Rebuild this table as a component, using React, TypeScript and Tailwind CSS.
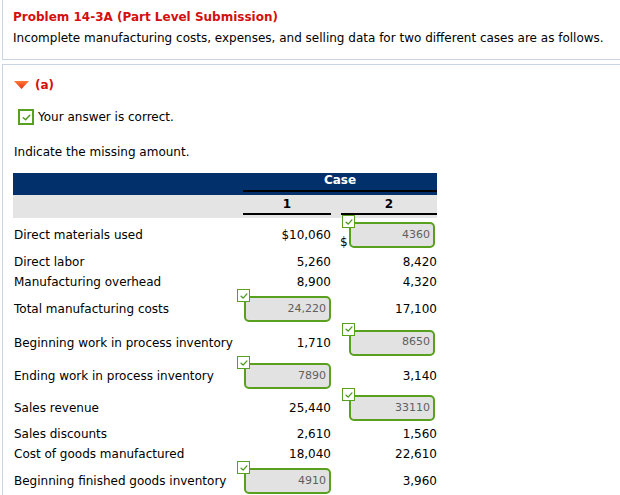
import React from "react";

type Cell = { value: string; input?: boolean; dollar?: boolean };
type Row = { label: string; h: string; c1: Cell; c2: Cell };

const rows: Row[] = [
	{ label: "Direct materials used", h: "h-[34px]", c1: { value: "$10,060" }, c2: { value: "4360", input: true, dollar: true } },
	{ label: "Direct labor", h: "h-[20px]", c1: { value: "5,260" }, c2: { value: "8,420" } },
	{ label: "Manufacturing overhead", h: "h-[20px]", c1: { value: "8,900" }, c2: { value: "4,320" } },
	{ label: "Total manufacturing costs", h: "h-[34px]", c1: { value: "24,220", input: true }, c2: { value: "17,100" } },
	{ label: "Beginning work in process inventory", h: "h-[33px]", c1: { value: "1,710" }, c2: { value: "8650", input: true } },
	{ label: "Ending work in process inventory", h: "h-[34px]", c1: { value: "7890", input: true }, c2: { value: "3,140" } },
	{ label: "Sales revenue", h: "h-[30px]", c1: { value: "25,440" }, c2: { value: "33110", input: true } },
	{ label: "Sales discounts", h: "h-[21px]", c1: { value: "2,610" }, c2: { value: "1,560" } },
	{ label: "Cost of goods manufactured", h: "h-[20px]", c1: { value: "18,040" }, c2: { value: "22,610" } },
	{ label: "Beginning finished goods inventory", h: "h-[34px]", c1: { value: "4910", input: true }, c2: { value: "3,960" } },
];

function Tick({ className }: { className?: string }) {
	return (
		<svg viewBox="0 0 12 12" className={className} fill="none">
			<path d="M2.5 6.2 L5 8.5 L9.5 3.5" stroke="#4f9a1e" strokeWidth="1.6" strokeLinecap="round" strokeLinejoin="round" />
		</svg>
	);
}

function AnswerBox({ cell, width }: { cell: Cell; width: string }) {
	return (
		<div className={`relative ${width}`}>
			<div className="h-[26px] rounded-[5px] border-2 border-[#58a01e] bg-[#e2e2e2] flex items-center justify-end pr-[3px] text-[11px] text-[#5f5f5f]">
				{cell.value}
			</div>
			<span className="absolute -left-[7px] -top-[7px] w-[13px] h-[13px] border border-[#58a01e] bg-white flex items-center justify-center">
				<Tick className="w-[10px] h-[10px]" />
			</span>
			{cell.dollar && (
				<span className="absolute -left-[9px] bottom-[-1px] text-[12px] leading-[14px] text-black">$</span>
			)}
		</div>
	);
}

export default function App() {
	return (
		<div className="w-[620px] h-[495px] overflow-hidden bg-white text-black text-[12px] font-['DejaVu_Sans',Verdana,sans-serif]">
			<div className="ml-[2px] w-[640px] h-[60px] border-l border-b border-[#c9d5e2] pl-[10px] pt-[9px]">
				<div className="font-bold text-[#d40f0f] leading-[16px]">Problem 14-3A (Part Level Submission)</div>
				<div className="mt-[5px] leading-[16px]">
					Incomplete manufacturing costs, expenses, and selling data for two different cases are as follows.
				</div>
			</div>

			<div className="ml-[2px] mt-[4px] w-[640px] h-[440px] border-l border-t border-[#c9d5e2] pl-[10px]">
				<div className="flex items-center gap-[6px] pt-[11px] h-[28px]">
					<svg width="15" height="8" viewBox="0 0 15 8" className="ml-[1px]">
						<defs>
							<linearGradient id="tri" x1="0" y1="0" x2="0" y2="1">
								<stop offset="0" stopColor="#ff7a3a" />
								<stop offset="1" stopColor="#e8300c" />
							</linearGradient>
						</defs>
						<path d="M0 0 H15 L7.5 8 Z" fill="url(#tri)" />
					</svg>
					<span className="font-bold text-[#d40f0f]">(a)</span>
				</div>

				<div className="flex items-center gap-[4px] mt-[15px] ml-[5px]">
					<span className="w-[16px] h-[16px] border-2 border-[#58a01e] bg-white flex items-center justify-center">
						<Tick className="w-[11px] h-[11px]" />
					</span>
					<span>Your answer is correct.</span>
				</div>

				<div className="mt-[17px] ml-px">Indicate the missing amount.</div>

				<div className="mt-[12px] w-[424px]">
					<div className="flex bg-[#01306a] h-[22px]">
						<div className="w-[230px]" />
						<div className="w-[194px] pb-[3px] flex flex-col">
							<div className="flex-1 border-b-2 border-black text-white font-bold text-[12px] leading-[15px] text-center">Case</div>
						</div>
					</div>
					<div className="flex bg-[#e4e4e4] h-[23px] pb-[3px]">
						<div className="w-[230px]" />
						<div className="w-[88px] border-b-2 border-black font-bold text-[12px] text-center leading-[18px]">1</div>
						<div className="w-[96px] ml-[10px] border-b-2 border-black font-bold text-[12px] text-center leading-[18px]">2</div>
					</div>

					{rows.map((r) => (
						<div key={r.label} className={`flex items-center ${r.h}`}>
							<div className="w-[230px] pl-px">{r.label}</div>
							<div className="w-[88px] flex justify-end">
								{r.c1.input ? <AnswerBox cell={r.c1} width="w-[87px]" /> : <span>{r.c1.value}</span>}
							</div>
							<div className="w-[96px] ml-[10px] flex justify-end">
								{r.c2.input ? (
									<div className="mr-[2px]">
										<AnswerBox cell={r.c2} width="w-[86px]" />
									</div>
								) : (
									<span>{r.c2.value}</span>
								)}
							</div>
						</div>
					))}
				</div>
			</div>
		</div>
	);
}
